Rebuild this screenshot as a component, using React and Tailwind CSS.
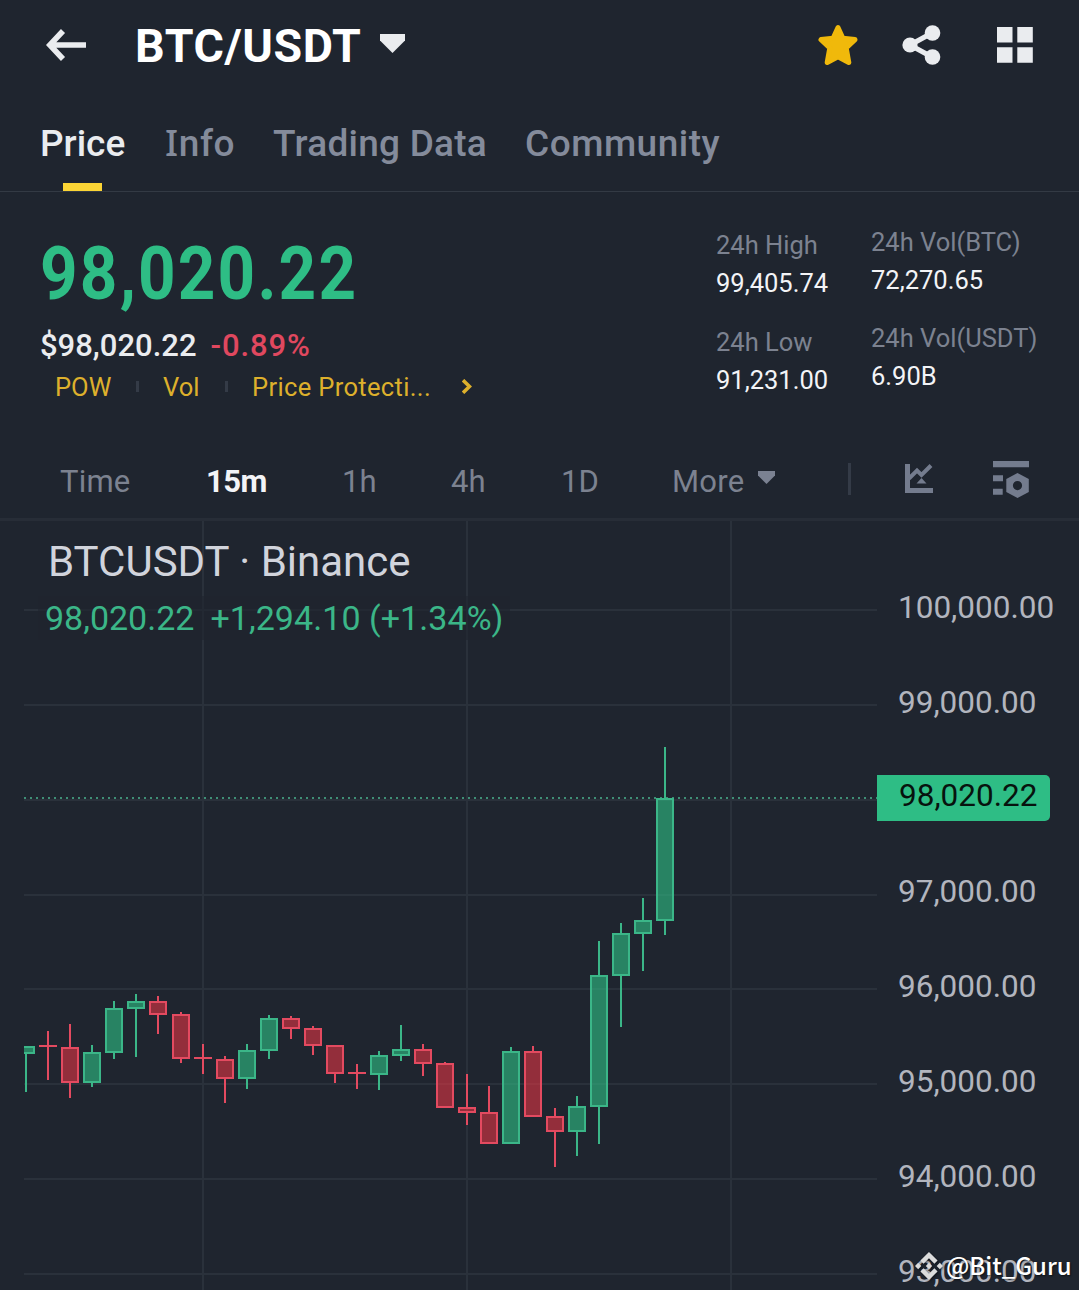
import { SiBinance } from "react-icons/si";

const UP = { line: "#3bb688", fill: "#2ebd85", opacity: 0.62 };
const DOWN = { line: "#e34a60", fill: "#f23645", opacity: 0.55 };

// [center x, direction, body top, body bottom, wick top, wick bottom]
const candles = [
  [26, "up", 1046, 1054, 1046, 1092],
  [48, "down", 1045, 1047, 1031, 1080],
  [70, "down", 1047, 1083, 1024, 1098],
  [92, "up", 1052, 1083, 1045, 1087],
  [114, "up", 1008, 1053, 1001, 1059],
  [136, "up", 1001, 1009, 994, 1057],
  [158, "down", 1001, 1015, 996, 1034],
  [181, "down", 1014, 1059, 1012, 1063],
  [203, "down", 1057, 1059, 1044, 1074],
  [225, "down", 1059, 1079, 1056, 1103],
  [247, "up", 1050, 1079, 1044, 1089],
  [269, "up", 1018, 1051, 1015, 1059],
  [291, "down", 1018, 1029, 1016, 1039],
  [313, "down", 1028, 1046, 1026, 1055],
  [335, "down", 1045, 1074, 1045, 1083],
  [357, "down", 1072, 1074, 1064, 1089],
  [379, "up", 1055, 1075, 1051, 1090],
  [401, "up", 1049, 1056, 1025, 1061],
  [423, "down", 1049, 1064, 1044, 1076],
  [445, "down", 1063, 1108, 1062, 1108],
  [467, "down", 1107, 1113, 1074, 1125],
  [489, "down", 1112, 1144, 1086, 1144],
  [511, "up", 1051, 1144, 1047, 1144],
  [533, "down", 1051, 1117, 1046, 1117],
  [555, "down", 1116, 1132, 1108, 1167],
  [577, "up", 1106, 1132, 1096, 1156],
  [599, "up", 975, 1107, 941, 1144],
  [621, "up", 933, 976, 923, 1027],
  [643, "up", 920, 934, 898, 971],
  [665, "up", 798, 921, 747, 935],
];

const gridRows = [610, 705, 800, 895, 989, 1084, 1179, 1274];
const gridCols = [203, 467, 731];

const axisLabels = [
  "100,000.00",
  "99,000.00",
  "",
  "97,000.00",
  "96,000.00",
  "95,000.00",
  "94,000.00",
  "93,000.00",
];

function Header() {
  return (
    <header className="flex h-[89px] shrink-0 items-center pl-[46px] pr-[46px]">
      <svg className="w-10 h-8" viewBox="0 0 40 32" fill="none" stroke="#eaecef" strokeWidth="5.6">
        <path d="M4 16H40M17 2L3.8 16L17 30" />
      </svg>
      <h1 className="ml-[49px] w-[226px] pt-[3px] whitespace-nowrap text-[46.5px] leading-none font-bold tracking-[0.6px] text-white">
        BTC/USDT
      </h1>
      <svg className="ml-[19px] -mt-[2px] w-[25px] h-[19px]" viewBox="0 0 25 19" fill="#eaecef">
        <path d="M0 0H25V6.5L12.5 19L0 6.5Z" />
      </svg>
      <svg className="ml-auto w-10 h-[42px]" viewBox="0 0 40 42" fill="#f0b90b" stroke="#f0b90b" strokeWidth="5" strokeLinejoin="round">
        <path d="M20 3.5L24.9 14.2L37 15.6L28.2 23.9L30.8 38.5L20 32.8L9.2 38.5L11.8 23.9L3 15.6L15.1 14.2Z" />
      </svg>
      <svg className="ml-[44px] w-[39px] h-10" viewBox="0 0 39 40" fill="#eaecef">
        <path d="M8 20L30 8M8 20L30 32" stroke="#eaecef" strokeWidth="5" />
        <circle cx="8" cy="20" r="7.6" />
        <circle cx="30.5" cy="8" r="7.8" />
        <circle cx="30.5" cy="32" r="7.8" />
      </svg>
      <svg className="ml-[56px] w-9 h-9" viewBox="0 0 36 36" fill="#eaecef">
        <path d="M0 0H15.5V15.5H0ZM20.3 0H35.8V15.5H20.3ZM0 20.3H15.5V35.8H0ZM20.3 20.3H35.8V35.8H20.3Z" />
      </svg>
    </header>
  );
}

function Tabs() {
  return (
    <nav className="flex h-[103px] shrink-0 border-b border-[#333a44] pl-[40px] text-[37px] leading-none font-medium whitespace-nowrap text-[#848b9b]">
      <div className="flex w-[125px] flex-col pt-[36px] text-[#eaecef]">
        Price
        <span className="mt-auto ml-[23px] h-2 w-[39px] bg-[#fcd535]" />
      </div>
      <div className="w-[108px] pt-[34px] tracking-[0.6px]">
        <span className="font-['Noto_Sans',sans-serif] leading-none">I</span>nfo
      </div>
      <div className="w-[252px] pt-[36px] tracking-[0.25px]">Trading Data</div>
      <div className="pt-[36px] tracking-[0.5px]">Community</div>
    </nav>
  );
}

function Stat({ label, value }) {
  return (
    <div className="h-[97px] text-[25.5px] leading-[38px] whitespace-nowrap">
      <div className="text-[#7c8290]">{label}</div>
      <div className="text-[#f3f4f7]">{value}</div>
    </div>
  );
}

function Summary() {
  return (
    <section className="flex h-[248px] shrink-0">
      <div className="w-[716px] pl-[39px]">
        <div className="mt-[45px] ml-px h-[74px] origin-left scale-x-[0.88] text-[74.5px] leading-[74px] font-bold tracking-[2.5px] whitespace-nowrap text-[#2ebd85]">
          98,020.22
        </div>
        <div className="mt-[17px] ml-px flex gap-[14px] text-[31px] leading-[36px] font-medium">
          <span className="text-[#eaecef]">$98,020.22</span>
          <span className="tracking-[0.9px] text-[#e0485f]">-0.89%</span>
        </div>
        <div className="mt-[6px] flex h-[36px] items-center pl-[16px] text-[25.5px] leading-none whitespace-nowrap text-[#ddb02c]">
          <span className="w-[81px]">POW</span>
          <span className="h-[11px] w-[3px] -mt-1 bg-[#343b47]" />
          <span className="ml-6 w-[62px]">Vol</span>
          <span className="h-[11px] w-[3px] -mt-1 bg-[#343b47]" />
          <span className="ml-6 w-[210px] tracking-[0.35px]">Price Protecti...</span>
          <svg className="-mt-[3px] w-[10px] h-[15px]" viewBox="0 0 10 15" fill="none" stroke="#ddb02c" strokeWidth="3.6">
            <path d="M1 1.2L7.5 7.5L1 13.8" />
          </svg>
        </div>
      </div>
      <div className="w-[155px] pt-[34px]">
        <Stat label="24h High" value="99,405.74" />
        <Stat label="24h Low" value="91,231.00" />
      </div>
      <div className="pt-[31px]">
        <Stat label="24h Vol(BTC)" value="72,270.65" />
        <div className="-mt-px">
          <Stat label="24h Vol(USDT)" value="6.90B" />
        </div>
      </div>
    </section>
  );
}

function Intervals() {
  return (
    <div className="flex h-[81px] shrink-0 items-center border-b-[3px] border-[#272d37] pl-[60px] text-[31px] leading-none whitespace-nowrap text-[#7c8290]">
      <span className="w-[146px] pt-1 tracking-[0.2px]">Time</span>
      <span className="w-[136px] pt-1 font-bold tracking-[-0.5px] text-[#f3f4f7]">15m</span>
      <span className="w-[109px] pt-1">1h</span>
      <span className="w-[110px] pt-1">4h</span>
      <span className="w-[111px] pt-1">1D</span>
      <span className="w-[86px] pt-1 tracking-[0.3px]">More</span>
      <svg className="-mt-[3px] w-[17px] h-[13px]" viewBox="0 0 17 13" fill="#7b8292">
        <path d="M0 0H17V4.5L8.5 13L0 4.5Z" />
      </svg>
      <span className="ml-[73px] h-8 w-[3px] bg-[#343b47]" />
      <svg className="ml-[54px] -mt-px w-[28px] h-[29px]" viewBox="0 0 28 29" fill="#747c8e">
        <path d="M0 0H5V24H28V29H0Z" />
        <path d="M4 14.5L12 6.5L16.5 11L26 1.5" fill="none" stroke="#747c8e" strokeWidth="4" />
        <path d="M16.5 14L21.5 19.5H11.5Z" />
      </svg>
      <svg className="ml-[60px] w-9 h-[37px]" viewBox="0 0 36 37" fill="#747c8e">
        <path d="M0 0H36V6.3H0ZM0 14.3H10V20.3H0ZM0 27.7H9.7V33.7H0Z" />
        <path fillRule="evenodd" d="M24.5 12L35.8 18V31L24.5 37L13.3 31V18ZM24.5 20A4.6 4.6 0 1 0 24.5 29.2A4.6 4.6 0 1 0 24.5 20Z" />
      </svg>
    </div>
  );
}

function Candle({ candle }) {
  const [x, dir, top, bottom, high, low] = candle;
  const c = dir === "up" ? UP : DOWN;
  return (
    <g>
      {high < top && <rect x={x - 1} y={high} width="2" height={top - high} fill={c.line} />}
      {low > bottom && <rect x={x - 1} y={bottom} width="2" height={low - bottom} fill={c.line} />}
      {bottom - top <= 2 ? (
        <rect x={x - 9} y={top} width="18" height="2" fill={c.line} />
      ) : (
        <rect
          x={x - 8}
          y={top + 1}
          width="16"
          height={bottom - top - 2}
          fill={c.fill}
          fillOpacity={c.opacity}
          stroke={c.line}
          strokeWidth="2"
        />
      )}
    </g>
  );
}

function Chart() {
  return (
    <section className="relative flex h-[769px] shrink-0 overflow-hidden">
      <svg className="w-[877px] h-[769px] shrink-0" viewBox="0 521 877 769">
        <defs>
          <clipPath id="plot">
            <rect x="24" y="521" width="853" height="769" />
          </clipPath>
        </defs>
        <g fill="#2a313b">
          {gridRows.map((y) => (
            <rect key={y} x="24" y={y - 1} width="853" height="2" />
          ))}
          {gridCols.map((x) => (
            <rect key={x} x={x - 1} y="521" width="2" height="769" />
          ))}
        </g>
        <path d="M24 798H877" stroke="#3f8f76" strokeWidth="2" strokeDasharray="2 4" />
        <g clipPath="url(#plot)">
          {candles.map((c) => (
            <Candle key={c[0]} candle={c} />
          ))}
        </g>
      </svg>

      <div className="pl-[21px] pt-[39px] text-[31.5px] whitespace-nowrap text-[#b2b5be]">
        {axisLabels.map((label, i) => (
          <div key={i} className="h-[94.8px] leading-[96px]">
            {label}
          </div>
        ))}
      </div>

      <div className="absolute left-[38px] top-[15px] whitespace-nowrap">
        <div className="pl-[10px] text-[42px] leading-[52px] text-[#d1d4dc]">BTCUSDT · Binance</div>
        <div className="mt-2 flex gap-4 bg-[#1f252f]/60 pr-[6px] pl-[7px] text-[34px] leading-[44px] text-[#3bb688]">
          <span>98,020.22</span>
          <span className="tracking-[0.06px]">+1,294.10 (+1.34%)</span>
        </div>
      </div>

      <div className="absolute left-[877px] top-[254px] h-[46px] w-[173px] rounded-r-[5px] bg-[#2ebd85] pl-[22px] text-[31.5px] leading-[42px] text-[#07130e]">
        98,020.22
      </div>

      <div className="absolute left-[915px] top-[729px] flex items-center whitespace-nowrap">
        <SiBinance className="size-7 text-[#dcdcdc] drop-shadow-[1px_1px_1px_rgba(0,0,0,0.5)]" />
        <span className="-mt-px ml-[3px] font-['Noto_Sans_CJK_SC','Noto_Sans',sans-serif] text-[24px] leading-8 font-medium text-white [text-shadow:1px_1px_2px_rgba(0,0,0,0.6)]">
          @Bit_Guru
        </span>
      </div>
    </section>
  );
}

export default function App() {
  return (
    <div className="flex h-[1290px] w-[1079px] flex-col overflow-hidden bg-[#1f252f] font-[Roboto,sans-serif]">
      <Header />
      <Tabs />
      <Summary />
      <Intervals />
      <Chart />
    </div>
  );
}
